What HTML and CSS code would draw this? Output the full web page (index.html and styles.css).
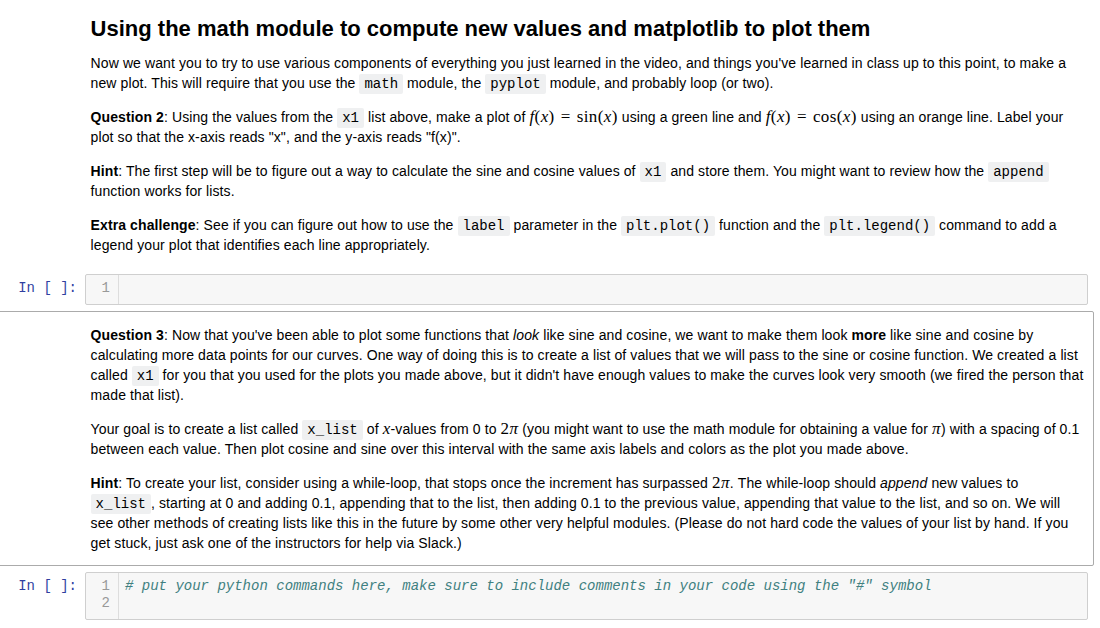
FILE: index.html
```html
<!DOCTYPE html>
<html>
<head>
<meta charset="utf-8">
<link rel="stylesheet" href="styles.css">
</head>
<body>
<div class="notebook">
  <div class="cell">
    <div class="prompt"></div>
    <div class="md">
      <h2>Using the math module to compute new values and matplotlib to plot them</h2>
      <p>Now we want you to try to use various components of everything you just learned in the video, and things you've learned in class up to this point, to make a new plot. This will require that you use the <code>math</code> module, the <code>pyplot</code> module, and probably loop (or two).</p>
      <p><b>Question 2</b>: Using the values from the <code>x1</code> list above, make a plot of <span class="math"><i>f</i>(<i>x</i>)<span class="eq">=</span>sin(<i>x</i>)</span> using a green line and <span class="math"><i>f</i>(<i>x</i>)<span class="eq">=</span>cos(<i>x</i>)</span> using an orange line. Label your plot so that the x-axis reads "x", and the y-axis reads "f(x)".</p>
      <p><b>Hint</b>: The first step will be to figure out a way to calculate the sine and cosine values of <code>x1</code> and store them. You might want to review how the <code>append</code> function works for lists.</p>
      <p><b>Extra challenge</b>: See if you can figure out how to use the <code>label</code> parameter in the <code>plt.plot()</code> function and the <code>plt.legend()</code> command to add a legend your plot that identifies each line appropriately.</p>
    </div>
  </div>
  <div class="cell">
    <div class="prompt code-prompt">In&nbsp;[&nbsp;]:</div>
    <div class="input">
      <div class="gutter"><div>1</div></div>
      <div class="code"><div class="line">&nbsp;</div></div>
    </div>
  </div>
  <div class="cell selected">
    <div class="prompt"></div>
    <div class="md">
      <p><b>Question 3</b>: Now that you've been able to plot some functions that <i>look</i> like sine and cosine, we want to make them look <b>more</b> like sine and cosine by calculating more data points for our curves. One way of doing this is to create a list of values that we will pass to the sine or cosine function. We created a list called <code>x1</code> for you that you used for the plots you made above, but it didn't have enough values to make the curves look very smooth (we fired the person that made that list).</p>
      <p>Your goal is to create a list called <code>x_list</code> of <span class="math"><i>x</i></span>-values from 0 to <span class="math">2<i>π</i></span> (you might want to use the math module for obtaining a value for <span class="math"><i>π</i></span>) with a spacing of 0.1 between each value. Then plot cosine and sine over this interval with the same axis labels and colors as the plot you made above.</p>
      <p><b>Hint</b>: To create your list, consider using a while-loop, that stops once the increment has surpassed <span class="math">2<i>π</i></span>. The while-loop should <i>append</i> new values to <code>x_list</code>, starting at 0 and adding 0.1, appending that to the list, then adding 0.1 to the previous value, appending that value to the list, and so on. We will see other methods of creating lists like this in the future by some other very helpful modules. (Please do not hard code the values of your list by hand. If you get stuck, just ask one of the instructors for help via Slack.)</p>
    </div>
  </div>
  <div class="cell">
    <div class="prompt code-prompt">In&nbsp;[&nbsp;]:</div>
    <div class="input">
      <div class="gutter"><div>1</div><div>2</div></div>
      <div class="code"><div class="line"><span class="comment"># put your python commands here, make sure to include comments in your code using the "#" symbol</span></div><div class="line">&nbsp;</div></div>
    </div>
  </div>
</div>
</body>
</html>
```

FILE: styles.css
```css
body {
  margin: 0;
  background: #ffffff;
  font-family: "Liberation Sans", Arial, Helvetica, sans-serif;
  font-size: 14px;
  line-height: 20px;
  color: #000000;
  overflow: hidden;
}

.notebook {
  width: 1100px;
  margin-left: -6px;
}

.cell {
  display: flex;
  padding: 5px;
  border: 1px solid transparent;
  border-radius: 2px;
}

.cell.selected {
  border-color: #ababab;
}

.prompt {
  flex: 0 0 85px;
  box-sizing: border-box;
}

.code-prompt {
  font-family: "Liberation Mono", "Courier New", monospace;
  font-size: 14px;
  line-height: 17.5px;
  color: #303f9f;
  text-align: right;
  padding: 6px 8px 0 0;
  white-space: nowrap;
}

.md {
  flex: 1;
  padding: 8px 4px 7px 5.6px;
  letter-spacing: 0.1px;
}

.md h2 {
  font-size: 22px;
  line-height: 28px;
  font-weight: bold;
  letter-spacing: 0;
  margin: 1px 0 10px;
}

.md p {
  margin: 0;
}

.md p + p {
  margin-top: 14px;
}

.md code {
  font-family: "Liberation Mono", "Courier New", monospace;
  font-size: 14px;
  line-height: 1;
  letter-spacing: 0;
  background: #eff0f1;
  padding: 2px 5px;
  border-radius: 2px;
  color: #000;
}

.math {
  font-family: "Liberation Serif", "Times New Roman", serif;
  font-size: 17px;
  line-height: 14px;
  letter-spacing: 0.4px;
  white-space: nowrap;
}

.math i {
  font-style: italic;
}

.eq {
  margin: 0 6px;
}

.input {
  flex: 1;
  display: flex;
  background: #f7f7f7;
  border: 1px solid #cfcfcf;
  border-radius: 2px;
}

.gutter {
  flex: 0 0 33px;
  box-sizing: border-box;
  border-right: 1px solid #dddddd;
  padding: 5px 8px 6px 0;
  text-align: right;
  font-family: "Liberation Mono", "Courier New", monospace;
  font-size: 14px;
  line-height: 17.5px;
  color: #999999;
}

.code {
  flex: 1;
  padding: 5px 6px 6px;
  font-family: "Liberation Mono", "Courier New", monospace;
  font-size: 14px;
  line-height: 17.5px;
}

.line {
  white-space: pre;
}

.comment {
  color: #408080;
  font-style: italic;
}
```
